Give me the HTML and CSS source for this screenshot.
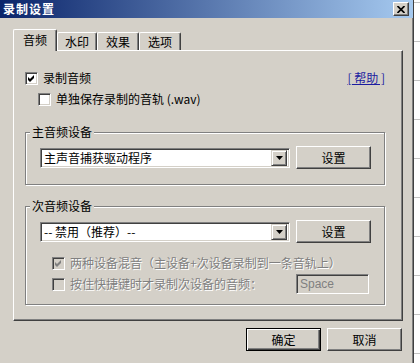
FILE: index.html
```html
<!DOCTYPE html>
<html lang="zh-CN">
<head>
<meta charset="utf-8">
<title>录制设置</title>
<link rel="stylesheet" href="styles.css">
</head>
<body>
<div class="dialog">
  <div class="titlebar">
    <span class="title">录制设置</span>
    <span class="close"><svg width="8" height="7" viewBox="0 0 8 7"><path d="M0.5 0 L7.5 7 M7.5 0 L0.5 7" stroke="#000" stroke-width="1.7" fill="none"/></svg></span>
  </div>
  <div class="content">
    <div class="tabs">
      <div class="tab active">音频</div>
      <div class="tab w40">水印</div>
      <div class="tab w42">效果</div>
      <div class="tab w42">选项</div>
    </div>
    <div class="panel">
      <div class="row">
        <span class="cb"><svg width="7" height="7" viewBox="0 0 7 7"><path d="M0 2 L2 4 L6 0 L6 3 L2 7 L0 5 Z" fill="#000"/></svg></span>
        <span class="label">录制音频</span>
        <a class="help">[ 帮助 ]</a>
      </div>
      <div class="row row2 indent">
        <span class="cb"></span>
        <span class="label">单独保存录制的音轨 (.wav)</span>
      </div>
      <fieldset class="group g1">
        <legend>主音频设备</legend>
        <div class="group-inner">
          <div class="device-row">
            <div class="combo"><span class="combo-text">主声音捕获驱动程序</span><span class="drop"><svg width="7" height="4" viewBox="0 0 7 4"><path d="M0 0 H7 L3.5 4 Z" fill="#000"/></svg></span></div>
            <button class="btn">设置</button>
          </div>
        </div>
      </fieldset>
      <fieldset class="group g2">
        <legend>次音频设备</legend>
        <div class="group-inner g2-inner">
          <div class="device-row">
            <div class="combo"><span class="combo-text">-- 禁用（推荐）--</span><span class="drop"><svg width="7" height="4" viewBox="0 0 7 4"><path d="M0 0 H7 L3.5 4 Z" fill="#000"/></svg></span></div>
            <button class="btn">设置</button>
          </div>
          <div class="row row3 sub">
            <span class="cb disabled"><svg width="7" height="7" viewBox="0 0 7 7"><path d="M0 2 L2 4 L6 0 L6 3 L2 7 L0 5 Z" fill="#808080"/></svg></span>
            <span class="label dis">两种设备混音（主设备+次设备录制到一条音轨上）</span>
          </div>
          <div class="row row4 sub">
            <span class="cb disabled"></span>
            <span class="label dis">按住快捷键时才录制次设备的音频：</span>
            <span class="hotkey">Space</span>
          </div>
        </div>
      </fieldset>
    </div>
    <div class="footer">
      <button class="btn default">确定</button>
      <button class="btn">取消</button>
    </div>
  </div>
</div>
</body>
</html>
```
FILE: styles.css
```css
* { box-sizing: border-box; }

body {
  margin: 0;
  width: 420px;
  height: 363px;
  overflow: hidden;
  background: repeating-linear-gradient(to bottom, #fff 0 2px, #c4c4c4 2px 3px, #fff 3px 39px);
  font-family: "Liberation Sans", "Noto Sans CJK SC", sans-serif;
  font-size: 12px;
  color: #000;
}

.dialog {
  width: 414px;
  height: 363px;
  background: #d4d0c8;
  border-right: 1px solid #404040;
  box-shadow: inset -1px 0 #808080;
}

.titlebar {
  height: 18px;
  display: flex;
  align-items: center;
  justify-content: space-between;
  padding: 0 4px 0 3px;
  background: linear-gradient(to right, #0a246a, #a6caf0);
}

.title {
  color: #fff;
  font-family: "Noto Sans CJK SC", sans-serif;
  font-weight: bold;
  font-size: 12px;
  letter-spacing: 1px;
  line-height: 14px;
}

.close {
  width: 16px;
  height: 14px;
  display: flex;
  align-items: center;
  justify-content: center;
  background: #d4d0c8;
  border-top: 1px solid #fff;
  border-left: 1px solid #fff;
  border-right: 1px solid #404040;
  border-bottom: 1px solid #404040;
  box-shadow: inset -1px -1px #808080;
}

.content {
  padding: 11px 10px 0 13px;
}

.tabs {
  display: flex;
  align-items: flex-end;
  height: 21px;
}

.tab {
  height: 18px;
  display: flex;
  align-items: center;
  justify-content: center;
  font-family: "Noto Sans CJK SC", sans-serif;
  line-height: 14px;
  border-top: 1px solid #fff;
  border-left: 1px solid #fff;
  border-right: 1px solid #404040;
  box-shadow: inset -1px 0 #808080;
  border-radius: 2px 2px 0 0;
  background: #d4d0c8;
}

.tab.w40 { width: 40px; }
.tab.w42 { width: 42px; }

.tab.active {
  width: 44px;
  height: 22px;
  margin-bottom: -1px;
  position: relative;
  z-index: 1;
  padding-bottom: 2px;
}

.panel {
  height: 271px;
  border-top: 1px solid #fff;
  border-left: 1px solid #fff;
  border-right: 1px solid #404040;
  border-bottom: 1px solid #404040;
  box-shadow: inset -1px -1px #808080;
  padding: 19px 17px 0 11px;
}

.row {
  display: flex;
  align-items: center;
  height: 16px;
}

.row2 { margin-top: 5px; }
.indent { padding-left: 13px; }

.cb {
  width: 13px;
  height: 13px;
  flex: none;
  display: flex;
  align-items: center;
  justify-content: center;
  background: #fff;
  border-top: 1px solid #808080;
  border-left: 1px solid #808080;
  border-right: 1px solid #fff;
  border-bottom: 1px solid #fff;
  box-shadow: inset 1px 1px #404040, inset -1px -1px #d4d0c8;
}

.cb.disabled { background: #d4d0c8; }

.label {
  margin-left: 5px;
  font-family: "Noto Sans CJK SC", sans-serif;
  line-height: 16px;
  white-space: nowrap;
}

.label.dis {
  color: #808080;
  text-shadow: 1px 1px 0 #fff;
}

.help {
  margin-left: auto;
  color: #1c1ca0;
  text-decoration: underline;
  font-family: "Noto Sans CJK SC", sans-serif;
  line-height: 14px;
  margin-right: 0;
}

.group {
  margin: 0;
  padding: 0;
  min-width: 0;
  width: 360px;
  border: 1px solid #808080;
  box-shadow: inset 1px 1px #fff, 1px 1px #fff;
}

.g1 { margin-top: 18px; }
.g2 { margin-top: 14px; }

.group legend {
  margin-left: 4px;
  padding: 0 2px;
  font-family: "Noto Sans CJK SC", sans-serif;
  font-size: 12px;
  line-height: 14px;
  background: #d4d0c8;
}

.group-inner {
  padding: 7px 12px 15px 14px;
}

.g2-inner { padding-bottom: 10px; }

.device-row {
  display: flex;
  align-items: center;
  gap: 6px;
  height: 23px;
}

.combo {
  width: 250px;
  height: 20px;
  display: flex;
  align-items: center;
  background: #fff;
  border-top: 1px solid #808080;
  border-left: 1px solid #808080;
  border-right: 1px solid #fff;
  border-bottom: 1px solid #fff;
  box-shadow: inset 1px 1px #404040, inset -1px -1px #d4d0c8;
  padding: 1px 2px 1px 3px;
}

.combo-text {
  flex: 1;
  font-family: "Noto Sans CJK SC", sans-serif;
  line-height: 16px;
  white-space: nowrap;
}

.drop {
  width: 16px;
  height: 16px;
  display: flex;
  align-items: center;
  justify-content: center;
  background: #d4d0c8;
  border-top: 1px solid #d4d0c8;
  border-left: 1px solid #d4d0c8;
  border-right: 1px solid #404040;
  border-bottom: 1px solid #404040;
  box-shadow: inset 1px 1px #fff, inset -1px -1px #808080;
}

.btn {
  width: 75px;
  height: 23px;
  padding: 0;
  font-family: "Noto Sans CJK SC", sans-serif;
  font-size: 12px;
  line-height: 14px;
  color: #000;
  background: #d4d0c8;
  border-top: 1px solid #fff;
  border-left: 1px solid #fff;
  border-right: 1px solid #404040;
  border-bottom: 1px solid #404040;
  box-shadow: inset -1px -1px #808080;
}

.btn.default {
  border: 1px solid #000;
  box-shadow: inset 1px 1px #fff, inset -1px -1px #404040, inset -2px -2px #808080;
}

.sub { padding-left: 12px; }
.row3 { margin-top: 12px; }
.row4 { margin-top: 3px; height: 20px; }

.hotkey {
  margin-left: auto;
  margin-right: 3px;
  width: 73px;
  height: 20px;
  padding: 1px 3px;
  color: #808080;
  font-family: "Liberation Sans", sans-serif;
  font-size: 12px;
  line-height: 16px;
  background: #d4d0c8;
  border-top: 1px solid #808080;
  border-left: 1px solid #808080;
  border-right: 1px solid #fff;
  border-bottom: 1px solid #fff;
  box-shadow: inset 1px 1px #404040, inset -1px -1px #d4d0c8;
}

.footer {
  display: flex;
  justify-content: flex-end;
  gap: 6px;
  margin-top: 7px;
  padding-right: 1px;
}
```
